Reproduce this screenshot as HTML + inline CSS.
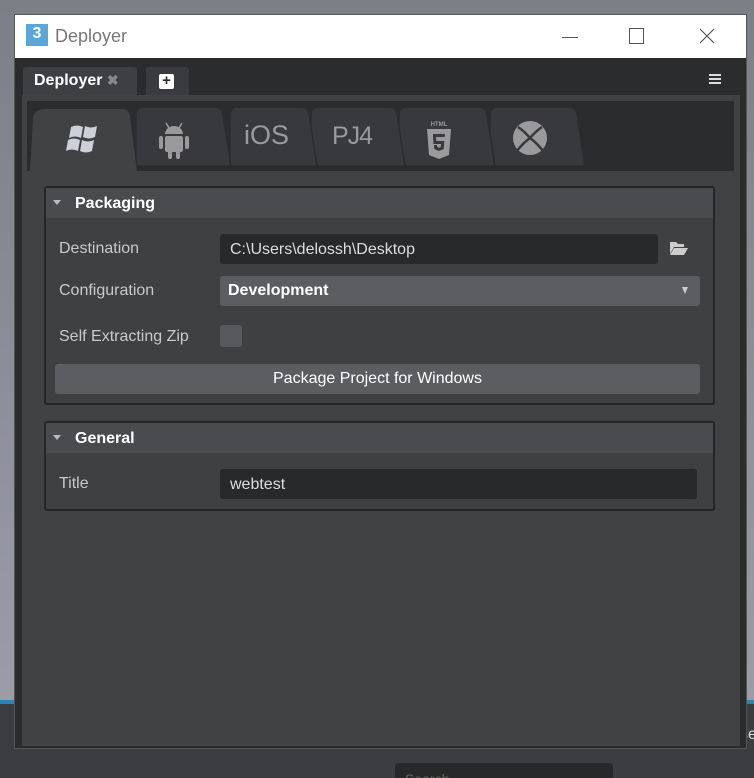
<!DOCTYPE html>
<html><head><meta charset="utf-8"><style>
*{box-sizing:border-box;margin:0;padding:0}
html,body{width:754px;height:778px;overflow:hidden}
body{background:#8e9097;font-family:"Liberation Sans",sans-serif;position:relative}
.abs{position:absolute}
.lbl{position:absolute;color:#c8c9cc;font-size:16px}
</style></head><body>
<div class="abs" style="left:0;top:0;width:754px;height:700px;background:linear-gradient(#7c7f86,#9b9ca6)"></div>
<div class="abs" style="left:0;top:700px;width:754px;height:4px;background:#2b83b8"></div>
<div class="abs" style="left:0;top:704px;width:754px;height:74px;background:#3c3d40"></div>
<div class="abs" style="left:395px;top:763px;width:218px;height:20px;background:#27282a;border-radius:3px;color:#666;font-size:14px;padding:8px 0 0 10px">Search</div>
<div class="abs" style="left:740px;top:726px;color:#ddd;font-size:16px">se</div>

<div class="abs" style="left:14px;top:14px;width:733px;height:735px;background:#2b2c2e;border:1px solid #555">
 <div class="abs" style="left:0;top:0;width:731px;height:43px;background:#fff"></div>
 <div class="abs" style="left:11px;top:9px;width:22px;height:22px;background:#5aa6d6;color:#fff;font-weight:bold;font-size:16px;text-align:center;line-height:20px">3</div>
 <div class="abs" style="left:40px;top:11px;font-size:18px;color:#777">Deployer</div>
 <div class="abs" style="left:547px;top:22px;width:16px;height:1px;background:#555"></div>
 <div class="abs" style="left:614px;top:13px;width:15px;height:16px;border:1px solid #555"></div>
 <svg class="abs" style="left:684px;top:13px" width="16" height="16" viewBox="0 0 16 16"><path d="M1 1L15 15M15 1L1 15" stroke="#555" stroke-width="1.2"/></svg>
 <div class="abs" style="left:8px;top:52px;width:114px;height:29px;background:#3e3f42;border-radius:3px 3px 0 0"></div>
 <div class="abs" style="left:19px;top:57px;color:#fff;font-weight:bold;font-size:16px">Deployer <span style="color:#888;font-size:14px">✖</span></div>
 <div class="abs" style="left:131px;top:52px;width:43px;height:29px;background:#3a3b3e;border-radius:3px 3px 0 0"></div>
 <div class="abs" style="left:144px;top:59px;width:15px;height:15px;background:#fff;border-radius:2px;color:#2b2c2e;font-weight:bold;font-size:15px;line-height:14px;text-align:center">+</div>
 <div class="abs" style="left:694px;top:59px;width:12px;height:10px;border-top:2px solid #ddd;border-bottom:2px solid #ddd"></div>
 <div class="abs" style="left:694px;top:63px;width:12px;height:2px;background:#ddd"></div>
 <div class="abs" style="left:7px;top:80px;width:718px;height:651px;background:#414244"></div>
 <div class="abs" style="left:12px;top:86px;width:707px;height:70px;background:#2b2c2e"></div>
 <svg class="abs" style="left:12px;top:86px" width="707" height="70" viewBox="0 0 707 70">
  <g fill="#38393c" stroke="#2b2c2e" stroke-width="1.5">
   <path d="M463 65L463 14Q463 6 471 6H542Q549 6 550 14L558 65z"/>
   <path d="M372 65L372 14Q372 6 380 6H452Q459 6 460 14L468 65z"/>
   <path d="M284 65L284 14Q284 6 292 6H362Q369 6 370 14L378 65z"/>
   <path d="M203 65L203 14Q203 6 211 6H274Q281 6 282 14L290 65z"/>
   <path d="M109 65L109 14Q109 6 117 6H188Q195 6 196 14L204 65z"/>
  </g>
  <path d="M3 70L6 16Q8 8 18 8H95Q102 8 103 16L110 70z" fill="#414244"/>
 </svg>
 <svg class="abs" style="left:50px;top:108px" width="38" height="36" viewBox="0 0 38 36"><g fill="#cdd0d8"><path d="M6 4q6-3 12 0l-2 11q-6-3-12 0z"/><path d="M20 3q6 3 12 0l-2 11q-6 3-12 0z"/><path d="M3 17q6-3 12 0l-2 11q-6-3-12 0z"/><path d="M17 17q6 3 12 0l-2 11q-6 3-12 0z"/></g></svg>
 <svg class="abs" style="left:142px;top:106px" width="34" height="40" viewBox="0 0 34 40"><g fill="#9a9a9c"><path d="M8 13a9 8 0 0 1 18 0z"/><rect x="8" y="15" width="18" height="16" rx="2"/><rect x="2" y="15" width="4" height="13" rx="2"/><rect x="28" y="15" width="4" height="13" rx="2"/><rect x="11" y="29" width="4" height="9" rx="2"/><rect x="19" y="29" width="4" height="9" rx="2"/><path d="M9 2l3 5M25 2l-3 5" stroke="#9a9a9c" stroke-width="1.5"/></g></svg>
 <div class="abs" style="left:229px;top:105px;font-size:27px;color:#9a9a9c">iOS</div>
 <div class="abs" style="left:317px;top:107px;font-size:25px;color:#9a9a9c;letter-spacing:-1px">PJ4</div>
 <svg class="abs" style="left:410px;top:104px" width="28" height="42" viewBox="0 0 28 42"><text x="14" y="7" font-size="6" fill="#9a9a9c" text-anchor="middle" font-family="Liberation Sans" font-weight="bold">HTML</text><path d="M2 10h24l-2 26-10 4-10-4z" fill="#9a9a9c"/><path d="M8 15h12l-.5 3h-8.5l.3 4h8l-.6 8-4.7 2-4.7-2-.3-4h3l.2 2 1.8 .7 1.8-.7.3-3h-7.7z" fill="#38393c"/></svg>
 <svg class="abs" style="left:497px;top:104px" width="36" height="38" viewBox="0 0 36 38"><circle cx="18" cy="19" r="17" fill="#9a9a9c"/>
  <path d="M6 8Q12 12 18 19Q24 12 30 8" fill="none" stroke="#38393c" stroke-width="2.5"/>
  <path d="M5 32Q10 25 18 19Q26 25 31 32" fill="none" stroke="#38393c" stroke-width="2.5"/></svg>
 <div class="abs" style="left:29px;top:171px;width:671px;height:219px;background:#3f4042;border:2px solid #252628;border-radius:3px"></div>
 <div class="abs" style="left:31px;top:173px;width:667px;height:30px;background:#4a4b4e"></div>
 <div class="abs" style="left:38px;top:185px;width:0;height:0;border-left:4px solid transparent;border-right:4px solid transparent;border-top:5px solid #bbb"></div>
 <div class="abs" style="left:60px;top:180px;color:#fff;font-weight:bold;font-size:16px">Packaging</div>
 <div class="lbl" style="left:44px;top:225px">Destination</div>
 <div class="abs" style="left:205px;top:219px;width:438px;height:30px;background:#28292b;border-radius:3px;color:#ddd;font-size:16px;padding:7px 0 0 10px">C:\Users\delossh\Desktop</div>
 <svg class="abs" style="left:654px;top:226px" width="20" height="14" viewBox="0 0 20 14"><path d="M1 1h6l2 2h6v3H5L1 13z" fill="#ccc"/><path d="M5 7h14l-4 7H1z" fill="#ccc"/></svg>
 <div class="lbl" style="left:44px;top:267px">Configuration</div>
 <div class="abs" style="left:205px;top:261px;width:480px;height:30px;background:#5c5d60;border-radius:3px;color:#fff;font-weight:bold;font-size:16px;padding:6px 0 0 8px">Development</div>
 <div class="abs" style="left:667px;top:272px;width:0;height:0;border-left:3.5px solid transparent;border-right:3.5px solid transparent;border-top:7px solid #ccc"></div>
 <div class="lbl" style="left:44px;top:313px">Self Extracting Zip</div>
 <div class="abs" style="left:205px;top:310px;width:22px;height:22px;background:#58595c;border-radius:3px"></div>
 <div class="abs" style="left:40px;top:349px;width:645px;height:30px;background:#5c5d60;border-radius:3px;color:#fff;font-size:16px;text-align:center;padding-top:6px">Package Project for Windows</div>
 <div class="abs" style="left:29px;top:406px;width:671px;height:90px;background:#3f4042;border:2px solid #252628;border-radius:3px"></div>
 <div class="abs" style="left:31px;top:408px;width:667px;height:30px;background:#4a4b4e"></div>
 <div class="abs" style="left:38px;top:420px;width:0;height:0;border-left:4px solid transparent;border-right:4px solid transparent;border-top:5px solid #bbb"></div>
 <div class="abs" style="left:60px;top:415px;color:#fff;font-weight:bold;font-size:16px">General</div>
 <div class="lbl" style="left:44px;top:460px">Title</div>
 <div class="abs" style="left:205px;top:454px;width:477px;height:30px;background:#28292b;border-radius:3px;color:#ddd;font-size:16px;padding:7px 0 0 10px">webtest</div>
</div>
</body></html>
